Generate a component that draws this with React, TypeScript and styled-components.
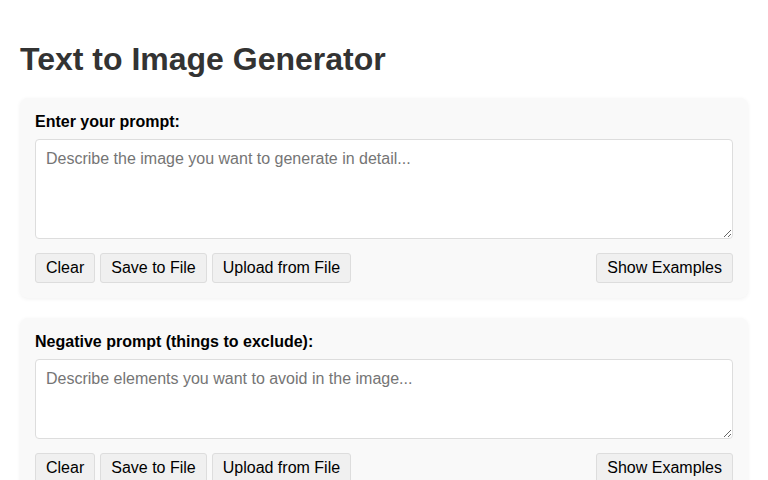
import React from "react";
import styled, { createGlobalStyle } from "styled-components";

const GlobalStyle = createGlobalStyle`
body {
  margin: 0;
  padding: 20px;
  background: #fff;
  font-family: "Liberation Sans", Arial, sans-serif;
  color: #000;
}
`

const Title = styled.h1`
font-size: 32px;
font-weight: bold;
color: #333;
margin: 0.67em 0 20px;
`

const Card = styled.section`
background: #f9f9f9;
border-radius: 8px;
padding: 15px;
margin-bottom: 20px;
box-shadow: 0 1px 4px rgba(0, 0, 0, 0.06);
`

const Label = styled.label`
display: block;
font-size: 16px;
font-weight: bold;
margin-bottom: 8px;
`

const PromptArea = styled.textarea<{ $height: number }>`
display: block;
box-sizing: border-box;
width: 100%;
height: ${p => p.$height}px;
padding: 10px;
border: 1px solid #ddd;
border-radius: 4px;
background: #fff;
font-family: "Liberation Sans", Arial, sans-serif;
font-size: 16px;
resize: vertical;
&::placeholder {
  color: #757575;
}
`

const ButtonRow = styled.div`
display: flex;
gap: 5px;
margin-top: 14px;
`

const Spacer = styled.div`
flex: 1;
`

const Button = styled.button`
font-family: "Liberation Sans", Arial, sans-serif;
font-size: 16px;
line-height: normal;
padding: 5px 10px;
background: #f0f0f0;
color: #000;
border: 1px solid #ddd;
border-radius: 3px;
cursor: pointer;
`

const PromptCard = ({ label, placeholder, height }: { label: string, placeholder: string, height: number }) =>
    <Card>
        <Label>{label}</Label>
        <PromptArea $height={height} placeholder={placeholder} />
        <ButtonRow>
            <Button>Clear</Button>
            <Button>Save to File</Button>
            <Button>Upload from File</Button>
            <Spacer />
            <Button>Show Examples</Button>
        </ButtonRow>
    </Card>

export default function App() {
    return (
        <>
            <GlobalStyle />
            <Title>Text to Image Generator</Title>
            <PromptCard
                label="Enter your prompt:"
                placeholder="Describe the image you want to generate in detail..."
                height={100}
            />
            <PromptCard
                label="Negative prompt (things to exclude):"
                placeholder="Describe elements you want to avoid in the image..."
                height={80}
            />
        </>
    )
}
